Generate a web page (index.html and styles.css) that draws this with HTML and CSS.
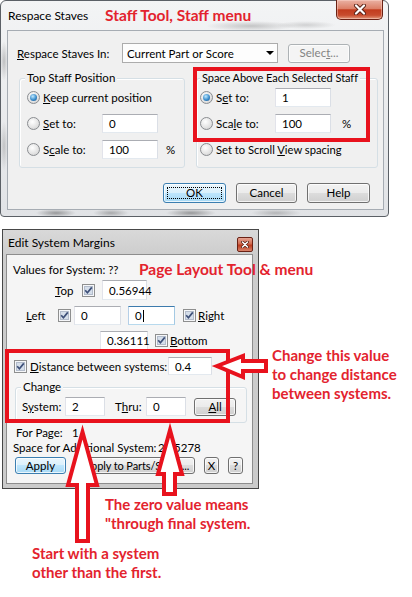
FILE: index.html
```html
<!DOCTYPE html>
<html>
<head>
<meta charset="utf-8">
<title>Respace Staves / Edit System Margins</title>
<link rel="stylesheet" href="styles.css">
</head>
<body>
<div class="page">
  <section class="dlg1">
    <div class="tb1">
      <span class="tb1-title">Respace Staves</span>
      <span class="note note-title">Staff Tool, Staff menu</span>
      <span class="close-big"><svg width="14" height="11" viewBox="0 0 14 11"><path d="M3 1.5 L11 9.5 M11 1.5 L3 9.5" stroke="#5a2216" stroke-width="4" stroke-linecap="round"/><path d="M3 1.5 L11 9.5 M11 1.5 L3 9.5" stroke="#fff" stroke-width="2.2" stroke-linecap="round"/></svg></span>
    </div>
    <div class="client1">
      <div class="row-in">
        <span class="lbl-in"><u>R</u>espace Staves In:</span>
        <span class="combo"><span>Current Part or Score</span><svg class="tri" width="8" height="4" viewBox="0 0 8 4"><polygon points="0,0 8,0 4,4" fill="#000"/></svg></span>
        <span class="btn btn-dis">Selec<u>t</u>...</span>
      </div>
      <div class="groups">
        <div class="grp grp-left">
          <span class="legend">Top Staff Position</span>
          <div class="opt"><span class="radio on"></span><span class="opt-lbl"><u>K</u>eep current position</span></div>
          <div class="opt"><span class="radio"></span><span class="opt-lbl w59"><u>S</u>et to:</span><span class="field w56">0</span></div>
          <div class="opt"><span class="radio"></span><span class="opt-lbl w59">S<u>c</u>ale to:</span><span class="field w56">100</span><span class="pct">%</span></div>
        </div>
        <div class="grp grp-right">
          <span class="legend legend-tight">Space Above Each Selected Staff</span>
          <div class="opt"><span class="radio on"></span><span class="opt-lbl w59">S<u>e</u>t to:</span><span class="field w56">1</span></div>
          <div class="opt"><span class="radio"></span><span class="opt-lbl w59">Sca<u>l</u>e to:</span><span class="field w56">100</span><span class="pct pct-r">%</span></div>
          <div class="opt"><span class="radio"></span><span class="opt-lbl tight">Set to Scroll <u>V</u>iew spacing</span></div>
        </div>
      </div>
      <div class="btnrow1">
        <span class="btn btn-def w63"><span class="focus">OK</span></span>
        <span class="btn w61">Cancel</span>
        <span class="btn w63">Help</span>
      </div>
      <div class="redbox redbox1"></div>
    </div>
  </section>

  <div class="row2">
    <section class="dlg2">
      <div class="tb2">
        <span class="tb2-title">Edit System Margins</span>
        <span class="close-sm"><svg width="8" height="7" viewBox="0 0 8 7"><path d="M1.5 1 L6.5 6 M6.5 1 L1.5 6" stroke="#5a2216" stroke-width="3" stroke-linecap="round"/><path d="M1.5 1 L6.5 6 M6.5 1 L1.5 6" stroke="#fff" stroke-width="1.5" stroke-linecap="round"/></svg></span>
      </div>
      <div class="client2">
        <div class="r-values">
          <span class="lbl-values">Values for System: ??</span>
          <span class="note note-layout">Page Layout Tool &amp; menu</span>
        </div>
        <div class="r-top">
          <span class="lbl-top"><u>T</u>op</span>
          <svg class="chk" width="13" height="13" viewBox="0 0 13 13"><rect x=".5" y=".5" width="12" height="12" fill="#f6f7f9" stroke="#8e8f8f"/><rect x="2.5" y="2.5" width="8" height="8" fill="#d5deea" stroke="#b3bccb"/><path d="M3.2 6.3 L5.4 8.8 L9.8 3.4" fill="none" stroke="#3d4f78" stroke-width="1.7"/></svg>
          <span class="field w45 ml7">0.56944</span>
        </div>
        <div class="r-left">
          <span class="lbl-left"><u>L</u>eft</span>
          <svg class="chk" width="13" height="13" viewBox="0 0 13 13"><rect x=".5" y=".5" width="12" height="12" fill="#f6f7f9" stroke="#8e8f8f"/><rect x="2.5" y="2.5" width="8" height="8" fill="#d5deea" stroke="#b3bccb"/><path d="M3.2 6.3 L5.4 8.8 L9.8 3.4" fill="none" stroke="#3d4f78" stroke-width="1.7"/></svg>
          <span class="field w47 ml3">0</span>
          <span class="field w47 ml7 focused">0<span class="caret"></span></span>
          <svg class="chk ml8" width="13" height="13" viewBox="0 0 13 13"><rect x=".5" y=".5" width="12" height="12" fill="#f6f7f9" stroke="#8e8f8f"/><rect x="2.5" y="2.5" width="8" height="8" fill="#d5deea" stroke="#b3bccb"/><path d="M3.2 6.3 L5.4 8.8 L9.8 3.4" fill="none" stroke="#3d4f78" stroke-width="1.7"/></svg>
          <span class="ml2"><u>R</u>ight</span>
        </div>
        <div class="r-bottom">
          <span class="field w48">0.36111</span>
          <svg class="chk ml7" width="13" height="13" viewBox="0 0 13 13"><rect x=".5" y=".5" width="12" height="12" fill="#f6f7f9" stroke="#8e8f8f"/><rect x="2.5" y="2.5" width="8" height="8" fill="#d5deea" stroke="#b3bccb"/><path d="M3.2 6.3 L5.4 8.8 L9.8 3.4" fill="none" stroke="#3d4f78" stroke-width="1.7"/></svg>
          <span class="ml2"><u>B</u>ottom</span>
        </div>
        <div class="r-dist">
          <svg class="chk" width="13" height="13" viewBox="0 0 13 13"><rect x=".5" y=".5" width="12" height="12" fill="#f6f7f9" stroke="#8e8f8f"/><rect x="2.5" y="2.5" width="8" height="8" fill="#d5deea" stroke="#b3bccb"/><path d="M3.2 6.3 L5.4 8.8 L9.8 3.4" fill="none" stroke="#3d4f78" stroke-width="1.7"/></svg>
          <span class="lbl-dist"><u>D</u>istance between systems:</span>
          <span class="field w44 h18">0.4</span>
        </div>
        <div class="grp grp2">
          <span class="legend legend2">Change</span>
          <div class="r-sys">
            <span class="lbl-sys">S<u>y</u>stem:</span>
            <span class="field w40">2</span>
            <span class="lbl-thru">T<u>h</u>ru:</span>
            <span class="field w40">0</span>
            <span class="btn btn-all"><u>A</u>ll</span>
          </div>
        </div>
        <div class="r-page"><span class="lbl-page">For Page:</span><span>1</span></div>
        <div class="r-space"><span class="lbl-space">Space for Additional System:</span><span>2.15278</span></div>
        <div class="r-btns">
          <span class="btn btn-def w51 h17">Apply</span>
          <span class="btn btn-parts w117 h17 ml12">Apply to Parts/Score...</span>
          <span class="btn w15 h17 ml9">X</span>
          <span class="btn w15 h17 ml9">?</span>
        </div>
        <div class="redbox redbox2"></div>
      </div>
    </section>
    <p class="note note-side">Change this value<br>to change distance<br>between systems.</p>
  </div>

  <p class="note note-zero">The zero value means<br>"through final system.</p>
  <p class="note note-start">Start with a system<br>other than the first.</p>

  <svg class="arrows" width="412" height="597" viewBox="0 0 412 597">
    <polygon points="82.5,432 97,485 88,485 88,541 77,541 77,485 68,485" fill="#fff" stroke="#e8121d" stroke-width="4" stroke-linejoin="miter"/>
    <polygon points="170,430 182,474 175,474 175,494 164,494 164,474 158,474" fill="#fff" stroke="#e8121d" stroke-width="4" stroke-linejoin="miter"/>
    <polygon points="217,366 243,356 243,361 266,361 266,371 243,371 243,377" fill="#fff" stroke="#e8121d" stroke-width="4" stroke-linejoin="miter"/>
  </svg>
</div>
</body>
</html>
```

FILE: styles.css
```css
body {
  margin: 0;
  background: #fff;
  font-family: Lato, "Liberation Sans", sans-serif;
  font-size: 11.5px;
  color: #000;
}

.page {
  position: relative;
  width: 412px;
  height: 597px;
  overflow: hidden;
}

u { text-decoration-thickness: 1px; text-underline-offset: 1px; }

/* ---------- annotations ---------- */
.note {
  font-family: Lato, "Liberation Sans", sans-serif;
  font-weight: bold;
  font-size: 15px;
  color: #e3232e;
  white-space: nowrap;
}
.note-title { margin-top: 5px; line-height: 18px; font-size: 15.5px; }
.note-layout { font-size: 15.5px; line-height: 16px; }
.note-side { margin: 117px 0 0 13px; line-height: 19px; }
.note-zero { margin: 6px 0 0 105px; line-height: 19px; }
.note-start { margin: 11px 0 0 32px; line-height: 19px; }

/* ---------- generic controls ---------- */
.field {
  box-sizing: border-box;
  height: 19px;
  background: #fff;
  border: 1px solid;
  border-color: #abadb3 #dbdfe6 #e3e9ef #e2e3ea;
  padding-left: 6px;
  line-height: 17px;
  display: flex;
  align-items: center;
  flex: none;
  white-space: nowrap;
}
.field.focused { border-color: #3d7bad #a4c9e3 #b7d9ed #b5cfe7; }
.caret { display: inline-block; width: 1px; height: 12px; background: #000; margin-left: 1px; }

.btn {
  box-sizing: border-box;
  height: 20px;
  border: 1px solid #707070;
  border-radius: 3px;
  background: linear-gradient(#f2f2f2, #ebebeb 50%, #dddddd 50%, #cfcfcf);
  box-shadow: inset 0 0 0 1px rgba(255,255,255,0.75);
  display: flex;
  align-items: center;
  justify-content: center;
  flex: none;
  line-height: 14px;
  white-space: nowrap;
  overflow: hidden;
}
.btn-def {
  border-color: #3c7fb1;
  background: linear-gradient(#eaf6fd, #d9f0fc 50%, #bee6fd 50%, #a7d9f5);
}
.btn-dis {
  margin-left: 10px;
  width: 62px;
  height: 19px;
  border-color: #adb2b5;
  background: #f4f4f4;
  color: #838383;
}
.btn-parts { font-size: 11px; letter-spacing: -0.1px; }
.focus {
  box-sizing: border-box;
  width: calc(100% - 6px);
  height: calc(100% - 6px);
  border: 1px dotted #000;
  display: flex;
  align-items: center;
  justify-content: center;
}

.radio {
  box-sizing: border-box;
  width: 13px;
  height: 13px;
  border-radius: 50%;
  border: 1px solid #8a8d91;
  background: radial-gradient(circle at 40% 35%, #ffffff, #e2e2e2 60%, #c9c9c9);
  margin-right: 3px;
  position: relative;
  flex: none;
}
.radio.on::after {
  content: "";
  position: absolute;
  left: 2px;
  top: 2px;
  width: 7px;
  height: 7px;
  border-radius: 50%;
  background: radial-gradient(circle at 40% 35%, #bfe9ff, #3a8dcc 55%, #164a82);
}

.chk { flex: none; display: block; }

.grp {
  box-sizing: border-box;
  border: 1px solid #d5dfe5;
  border-radius: 3px;
  box-shadow: inset 1px 1px 0 #fff;
  display: flex;
  flex-direction: column;
}
.legend {
  align-self: flex-start;
  margin: -8px 0 0 5px;
  padding: 0 2px;
  line-height: 14px;
  background: #f0f0f0;
  white-space: nowrap;
}
.legend-tight { margin-left: 3px; font-size: 11px; letter-spacing: -0.05px; }
.tight { font-size: 11.2px; }
.redbox {
  position: absolute;
  box-sizing: border-box;
  border: 4px solid #e8121d;
}

/* widths / spacing helpers */
.w15 { width: 15px; } .w40 { width: 40px; } .w44 { width: 44px; } .w45 { width: 45px; }
.w47 { width: 47px; } .w48 { width: 48px; } .w51 { width: 51px; } .w56 { width: 56px; }
.w59 { width: 59px; } .w61 { width: 61px; } .w63 { width: 63px; } .w117 { width: 117px; }
.h17 { height: 17px; } .h18 { height: 18px; }
.ml2 { margin-left: 2px; } .ml3 { margin-left: 3px; } .ml7 { margin-left: 7px; }
.ml8 { margin-left: 8px; } .ml9 { margin-left: 9px; } .ml12 { margin-left: 12px; }

/* ---------- dialog 1 ---------- */
.dlg1 {
  box-sizing: border-box;
  width: 389px;
  height: 217px;
  border: 1px solid #5b6066;
  border-radius: 6px 6px 4px 4px;
  padding: 0 4px 6px 6px;
  display: flex;
  flex-direction: column;
  background:
    radial-gradient(ellipse 45px 5px at 250px 25px, rgba(90,90,90,.30), transparent),
    radial-gradient(ellipse 30px 4px at 305px 24px, rgba(90,90,90,.22), transparent),
    radial-gradient(ellipse 20px 4px at 55px 212px, rgba(60,60,60,.45), transparent),
    radial-gradient(ellipse 18px 4px at 110px 212px, rgba(60,60,60,.35), transparent),
    radial-gradient(ellipse 25px 4px at 190px 212px, rgba(60,60,60,.45), transparent),
    radial-gradient(ellipse 25px 4px at 275px 212px, rgba(60,60,60,.28), transparent),
    radial-gradient(ellipse 4px 20px at 3px 60px, rgba(80,80,80,.30), transparent),
    radial-gradient(ellipse 4px 25px at 3px 145px, rgba(80,80,80,.25), transparent),
    linear-gradient(#f3f4f5, #e1e3e6);
}
.tb1 { height: 29px; display: flex; align-items: flex-start; flex: none; }
.tb1-title { margin: 7px 0 0 1px; line-height: 16px; width: 97px; font-size: 12px; }
.close-big {
  margin: -1px 1px 0 auto;
  box-sizing: border-box;
  width: 47px;
  height: 20px;
  border: 1px solid #6a2114;
  border-top: none;
  border-radius: 0 0 5px 5px;
  background: linear-gradient(#eab2a4 0%, #dc8068 45%, #c23c1e 52%, #c84c2e 80%, #e39a7c 100%);
  box-shadow: inset 0 0 0 1px rgba(255,220,210,.45);
  display: flex;
  align-items: center;
  justify-content: center;
}
.client1 {
  flex: 1;
  background: #f0f0f0;
  border: 1px solid #a6acb3;
  position: relative;
  display: flex;
  flex-direction: column;
}
.row-in { display: flex; align-items: center; height: 20px; margin: 12px 0 0 9px; }
.lbl-in { width: 105px; flex: none; }
.combo {
  box-sizing: border-box;
  width: 156px;
  height: 20px;
  border: 1px solid #acacac;
  background: #fdfdfd;
  display: flex;
  align-items: center;
  justify-content: space-between;
  padding: 0 2px 0 4px;
  white-space: nowrap;
}
.tri { margin-right: 1px; }
.groups { display: flex; gap: 11px; margin: 15px 0 0 11px; }
.grp-left { width: 166px; height: 90px; }
.grp-right { width: 182px; height: 90px; }
.opt { display: flex; align-items: center; height: 20px; margin-top: 6px; }
.legend + .opt { margin-top: 2px; }
.grp-left .opt { padding-left: 7px; }
.grp-right .opt { padding-left: 3px; }
.opt-lbl { flex: none; white-space: nowrap; }
.pct { margin-left: 8px; }
.pct-r { margin-left: 11px; }
.btnrow1 { display: flex; justify-content: flex-end; gap: 10px; margin: 15px 13px 0 0; }
.redbox1 { left: 185px; top: 36px; width: 177px; height: 75px; }

/* ---------- dialog 2 ---------- */
.row2 { display: flex; align-items: flex-start; margin-top: 12px; }
.dlg2 {
  box-sizing: border-box;
  width: 257px;
  height: 260px;
  margin-left: 2px;
  border: 1px solid #474747;
  background: linear-gradient(#d9d9d9, #cdcdcd 25px, #cbcbcb);
  padding: 0 5px 4px 3px;
  display: flex;
  flex-direction: column;
  flex: none;
}
.tb2 { height: 24px; display: flex; align-items: flex-start; flex: none; }
.tb2-title { margin: 5px 0 0 2px; line-height: 16px; font-size: 12px; }
.close-sm {
  margin: 7px 0 0 auto;
  box-sizing: border-box;
  width: 16px;
  height: 15px;
  border: 1px solid #6a2114;
  border-radius: 2px;
  background: linear-gradient(#e6a392, #d06a4f 45%, #bb3a1d 55%, #d9836a);
  display: flex;
  align-items: center;
  justify-content: center;
}
.client2 {
  flex: 1;
  background: #f5f5f5;
  border: 1px solid #8d8d8d;
  position: relative;
  display: flex;
  flex-direction: column;
}
.client2 .legend { background: #f5f5f5; }
.r-values { display: flex; align-items: center; height: 16px; margin: 6px 0 0 6px; white-space: nowrap; }
.lbl-values { width: 126px; flex: none; }
.r-top { display: flex; align-items: center; height: 20px; margin: 3px 0 0 48px; }
.r-top .field { height: 20px; }
.lbl-top { width: 27px; flex: none; }
.r-left { display: flex; align-items: center; height: 19px; margin: 6px 0 0 19px; }
.lbl-left { width: 32px; flex: none; }
.r-bottom { display: flex; align-items: center; height: 19px; margin: 6px 0 0 93px; }
.r-dist { display: flex; align-items: center; height: 18px; margin: 7px 0 0 7px; }
.lbl-dist { width: 138px; margin-left: 3px; flex: none; white-space: nowrap; }
.grp2 { width: 232px; height: 36px; margin: 12px 0 0 8px; }
.r-sys { display: flex; align-items: center; height: 19px; margin-top: 3px; padding-left: 6px; }
.lbl-sys { width: 43px; flex: none; }
.lbl-thru { width: 31px; margin-left: 10px; flex: none; }
.btn-all { width: 42px; height: 18px; margin-left: 8px; }
.r-page { display: flex; align-items: center; height: 14px; margin: 2px 0 0 9px; }
.lbl-page { width: 56px; }
.r-space { display: flex; align-items: center; height: 14px; margin: 1px 0 0 6px; white-space: nowrap; }
.lbl-space { width: 145px; flex: none; }
.r-btns { display: flex; align-items: center; height: 17px; margin: 3px 0 0 8px; }
.redbox2 { left: -2px; top: 94px; width: 225px; height: 74px; }

/* ---------- arrows overlay ---------- */
.arrows { position: absolute; left: 0; top: 0; pointer-events: none; }
```
